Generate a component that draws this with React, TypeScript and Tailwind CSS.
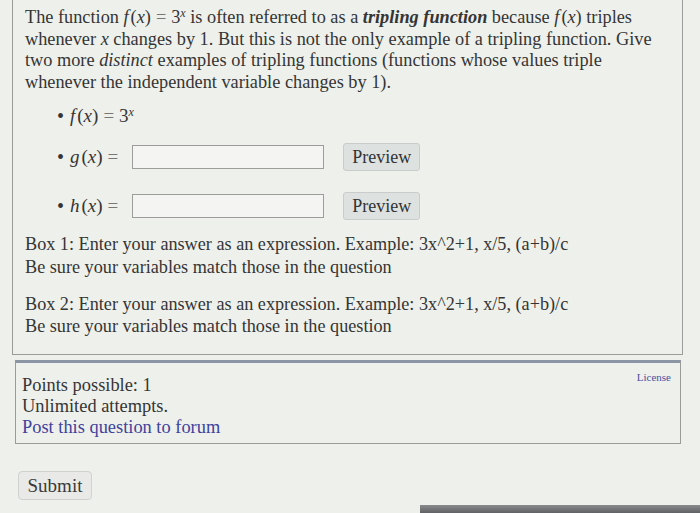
import React from 'react';

const serif = { fontFamily: '"Liberation Serif", "Times New Roman", serif' };

const MathVar = ({ children }: { children: React.ReactNode }) => (
  <span className="italic">{children}</span>
);

const Fx = ({ name }: { name: string }) => (
  <span className="whitespace-nowrap">
    <MathVar>{name}</MathVar>
    <span className="ml-[2px]">(</span>
    <MathVar>x</MathVar>)
  </span>
);

const Eq = () => <span className="mx-[5px] text-[#777]">=</span>;

const AnswerRow = ({ name, className }: { name: string; className: string }) => (
  <li className={`flex items-center ${className}`}>
    <span className="w-[13px] text-[20px] leading-none">•</span>
    <span className="text-[19px]">
      <Fx name={name} />
      <Eq />
    </span>
    <input
      type="text"
      className="ml-[9px] h-[24px] w-[192px] border border-[#9c9d9b] bg-[#f4f5f2] outline-none"
    />
    <button className="ml-[19px] h-[28px] w-[77px] rounded-[3px] border border-[#c9cccb] bg-[#dde2e1] text-[18px] text-[#333]">
      Preview
    </button>
  </li>
);

export default function App() {
  return (
    <div className="h-[513px] w-[700px] overflow-hidden bg-[#eef0ec] text-[#353535]" style={serif}>
      {/* question box */}
      <div className="ml-[12px] w-[671px] border-x border-b border-[#9a9c9a] pl-[12px] pt-[7px]">
        <div className="text-[18.3px] leading-[21.7px]">
          <div className="whitespace-nowrap">
            The function <Fx name="f" />
            <Eq />3<sup className="italic text-[12px]">x</sup> is often referred to as a{' '}
            <b className="italic">tripling function</b> because <Fx name="f" /> triples
          </div>
          <div className="whitespace-nowrap">
            whenever <MathVar>x</MathVar> changes by 1. But this is not the only example of a tripling function. Give
          </div>
          <div className="whitespace-nowrap">
            two more <i>distinct</i> examples of tripling functions (functions whose values triple
          </div>
          <div className="whitespace-nowrap">whenever the independent variable changes by 1).</div>
        </div>

        <ul className="pl-[32px]">
          <li className="mt-[11px] flex h-[22px] items-center">
            <span className="w-[13px] text-[20px] leading-none">•</span>
            <span className="text-[19px]">
              <Fx name="f" />
              <Eq />3<sup className="italic text-[12px]">x</sup>
            </span>
          </li>
          <AnswerRow name="g" className="mt-[16px] h-[28px]" />
          <AnswerRow name="h" className="mt-[21px] h-[28px]" />
        </ul>

        <div className="mt-[13px] text-[18.2px] leading-[23px]">
          <div>Box 1: Enter your answer as an expression. Example: 3x^2+1, x/5, (a+b)/c</div>
          <div>Be sure your variables match those in the question</div>
        </div>
        <div className="mt-[14px] pb-[17px] text-[18.2px] leading-[22px]">
          <div>Box 2: Enter your answer as an expression. Example: 3x^2+1, x/5, (a+b)/c</div>
          <div>Be sure your variables match those in the question</div>
        </div>
      </div>

      {/* footer info box */}
      <div className="relative ml-[15px] mt-[5px] w-[666px] border border-t-[3px] border-[#9a9c9a] border-t-[#8c95a3] pb-[5px] pl-[6px] pt-[12px] text-[18.4px] leading-[21px]">
        <a className="absolute right-[9px] top-[4px] text-[11px] text-[#4a4fa0]">License</a>
        <div>Points possible: 1</div>
        <div>Unlimited attempts.</div>
        <a className="text-[#3e439c]">Post this question to forum</a>
      </div>

      <button className="ml-[18px] mt-[27px] h-[29px] w-[74px] rounded-[4px] border border-[#d0d2cf] bg-[#e9eae7] text-[19px] text-[#3a3a3a]">
        Submit
      </button>

      <div className="ml-[420px] mt-[5px] h-[12px] bg-gradient-to-b from-[#8a8b8d] to-[#4d4e51]" />
    </div>
  );
}
